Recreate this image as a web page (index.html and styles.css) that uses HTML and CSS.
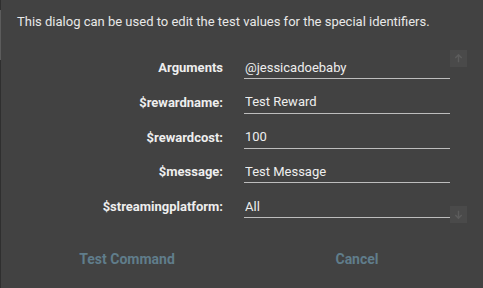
FILE: index.html
```html
<!DOCTYPE html>
<html lang="en">
<head>
  <meta charset="UTF-8">
  <title>Test Special Identifiers</title>
  <link rel="stylesheet" href="styles.css">
</head>
<body>

<div class="dialog">
  <div class="edge-mark"></div>

  <p class="intro">This dialog can be used to edit the test values for the special identifiers.</p>

  <div class="form">
    <label class="field-label">Arguments</label>
    <input class="field-input" type="text" value="@jessicadoebaby">

    <label class="field-label">$rewardname:</label>
    <input class="field-input" type="text" value="Test Reward">

    <label class="field-label">$rewardcost:</label>
    <input class="field-input" type="text" value="100">

    <label class="field-label">$message:</label>
    <input class="field-input" type="text" value="Test Message">

    <label class="field-label">$streamingplatform:</label>
    <input class="field-input" type="text" value="All">
  </div>

  <!-- scroll buttons sit over the list -->
  <div class="scroll-btn scroll-up">
    <svg width="11" height="11" viewBox="0 0 12 12"><path d="M6 10V2M2.5 5.5L6 2l3.5 3.5" fill="none" stroke="#5c5c5c" stroke-width="1.6"/></svg>
  </div>
  <div class="scroll-btn scroll-down">
    <svg width="11" height="11" viewBox="0 0 12 12"><path d="M6 2v8M2.5 6.5L6 10l3.5-3.5" fill="none" stroke="#5c5c5c" stroke-width="1.6"/></svg>
  </div>

  <div class="actions">
    <button class="action-btn">Test Command</button>
    <button class="action-btn">Cancel</button>
  </div>
</div>

</body>
</html>
```

FILE: styles.css
```css
body {
  margin: 0;
  padding: 0;
  background-color: #424242;
  font-family: Roboto, "Noto Sans", sans-serif;
  color: #e8e8e8;
}

.dialog {
  position: relative;
  height: 288px;
  border-left: 1px solid #2f2f2f;
  box-sizing: border-box;
}

.edge-mark {
  position: absolute;
  left: -1px;
  top: 10px;
  width: 1px;
  height: 50px;
  background-color: #5c5c5c;
}

/* Intro text */
.intro {
  margin: 0;
  padding: 14px 0 0 16px;
  font-size: 13px;
  line-height: 16px;
}

/* Form grid */
.form {
  display: grid;
  grid-template-columns: 222px 206px;
  column-gap: 21px;
  row-gap: 11.75px;
  align-items: center;
  margin-top: 26px;
}

.field-label {
  text-align: right;
  font-size: 13px;
  font-weight: bold;
  color: #eeeeee;
}

.field-input {
  height: 23px;
  padding: 0 1px;
  border: none;
  border-bottom: 1px solid #bdbdbd;
  background: transparent;
  color: #eeeeee;
  font-family: Roboto, "Noto Sans", sans-serif;
  font-size: 13px;
  box-sizing: border-box;
  outline: none;
}

/* Scroll buttons */
.scroll-btn {
  position: absolute;
  left: 449px;
  width: 17px;
  height: 17px;
  background-color: #4a4a4a;
  display: flex;
  align-items: center;
  justify-content: center;
}

.scroll-up {
  top: 50px;
}

.scroll-down {
  top: 206px;
}

/* Actions */
.actions {
  display: flex;
  padding-left: 11px;
  margin-top: 23px;
}

.action-btn {
  width: 230px;
  height: 36px;
  border: none;
  background: transparent;
  color: #607d8b;
  font-family: Roboto, "Noto Sans", sans-serif;
  font-size: 14px;
  font-weight: bold;
  cursor: pointer;
}
```
